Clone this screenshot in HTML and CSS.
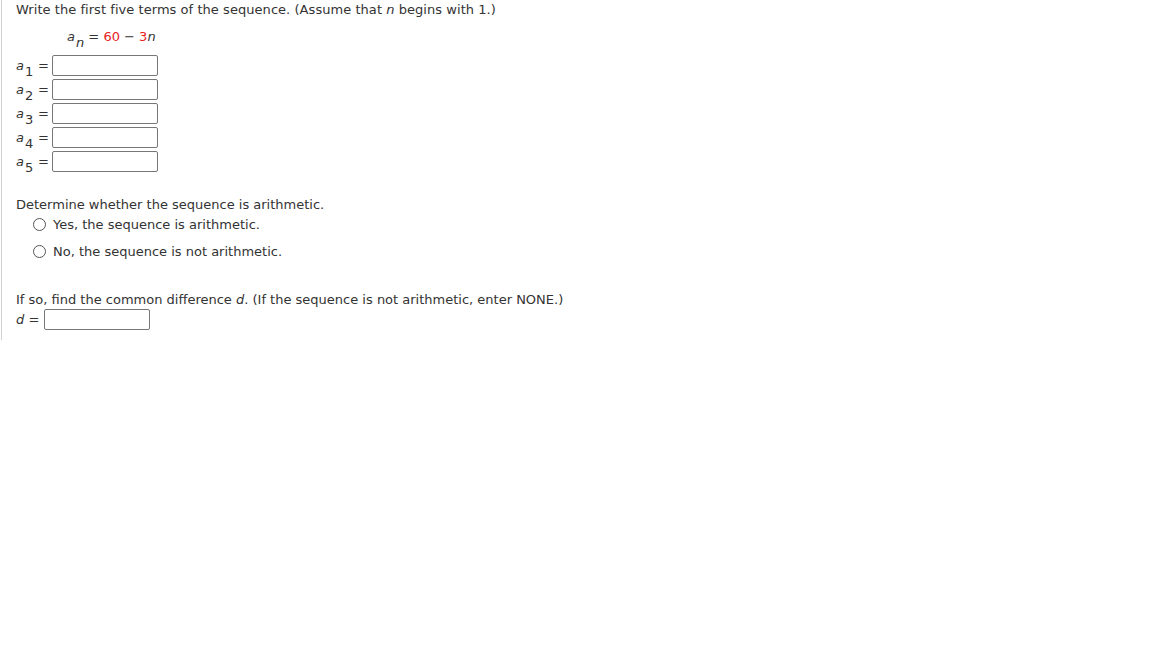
FILE: index.html
```html
<!DOCTYPE html>
<html>
<head>
<meta charset="utf-8">
<link rel="stylesheet" href="styles.css">
</head>
<body>
<div class="question">
  <p class="prompt">Write the first five terms of the sequence. (Assume that <i>n</i> begins with 1.)</p>
  <div class="formula"><i>a</i><sub><i>n</i></sub> = <span class="val">60</span> &minus; <span class="val">3</span><i>n</i></div>
  <div class="terms">
    <div class="term"><span class="lbl"><i>a</i><sub>1</sub></span><span class="eq">=</span><span class="box"></span></div>
    <div class="term"><span class="lbl"><i>a</i><sub>2</sub></span><span class="eq">=</span><span class="box"></span></div>
    <div class="term"><span class="lbl"><i>a</i><sub>3</sub></span><span class="eq">=</span><span class="box"></span></div>
    <div class="term"><span class="lbl"><i>a</i><sub>4</sub></span><span class="eq">=</span><span class="box"></span></div>
    <div class="term"><span class="lbl"><i>a</i><sub>5</sub></span><span class="eq">=</span><span class="box"></span></div>
  </div>
  <p class="determine">Determine whether the sequence is arithmetic.</p>
  <div class="options">
    <div class="option"><span class="radio"></span><span>Yes, the sequence is arithmetic.</span></div>
    <div class="option"><span class="radio"></span><span>No, the sequence is not arithmetic.</span></div>
  </div>
  <p class="ifso">If so, find the common difference <i>d</i>. (If the sequence is not arithmetic, enter NONE.)</p>
  <div class="drow"><i>d</i>&nbsp;=&nbsp;<span class="box dbox"></span></div>
</div>
</body>
</html>
```
FILE: styles.css
```css
html, body {
  margin: 0;
  padding: 0;
  background: #fff;
}
body {
  font-family: "DejaVu Sans", Verdana, sans-serif;
  font-size: 13px;
  color: #333;
}
.question {
  margin-left: 1px;
  border-left: 1px solid #d0d0d0;
  padding: 0 0 10px 14px;
  width: 700px;
}
p { margin: 0; }
i { font-style: italic; }
.prompt {
  line-height: 17px;
  padding-top: 1px;
  letter-spacing: 0.05px;
}
.formula {
  padding-left: 51px;
  margin-top: 10px;
  line-height: 17px;
}
.formula sub, .lbl sub {
  font-size: 13px;
  vertical-align: -6px;
  line-height: 0;
  margin-left: 1px;
}
.val { color: #e8231c; }
.terms {
  margin-top: 10px;
  display: flex;
  flex-direction: column;
  gap: 3px;
}
.term {
  display: flex;
  align-items: center;
  height: 21px;
}
.lbl {
  width: 22px;
}
.eq {
  width: 14px;
}
.box {
  display: inline-block;
  width: 104px;
  height: 19px;
  border: 1px solid #777;
  border-radius: 2px;
  background: #fff;
}
.determine {
  margin-top: 24px;
  line-height: 17px;
}
.options {
  padding-left: 17px;
  display: flex;
  flex-direction: column;
  gap: 10px;
  margin-top: 3px;
}
.option {
  display: flex;
  align-items: center;
  gap: 7px;
  line-height: 17px;
}
.radio {
  width: 11px;
  height: 11px;
  border: 1px solid #555;
  border-radius: 50%;
  background: #fff;
}
.ifso {
  margin-top: 31px;
  line-height: 17px;
}
.drow {
  margin-top: 1px;
  display: flex;
  align-items: center;
  line-height: 17px;
}
.dbox {
  margin-left: 1px;
}
```
